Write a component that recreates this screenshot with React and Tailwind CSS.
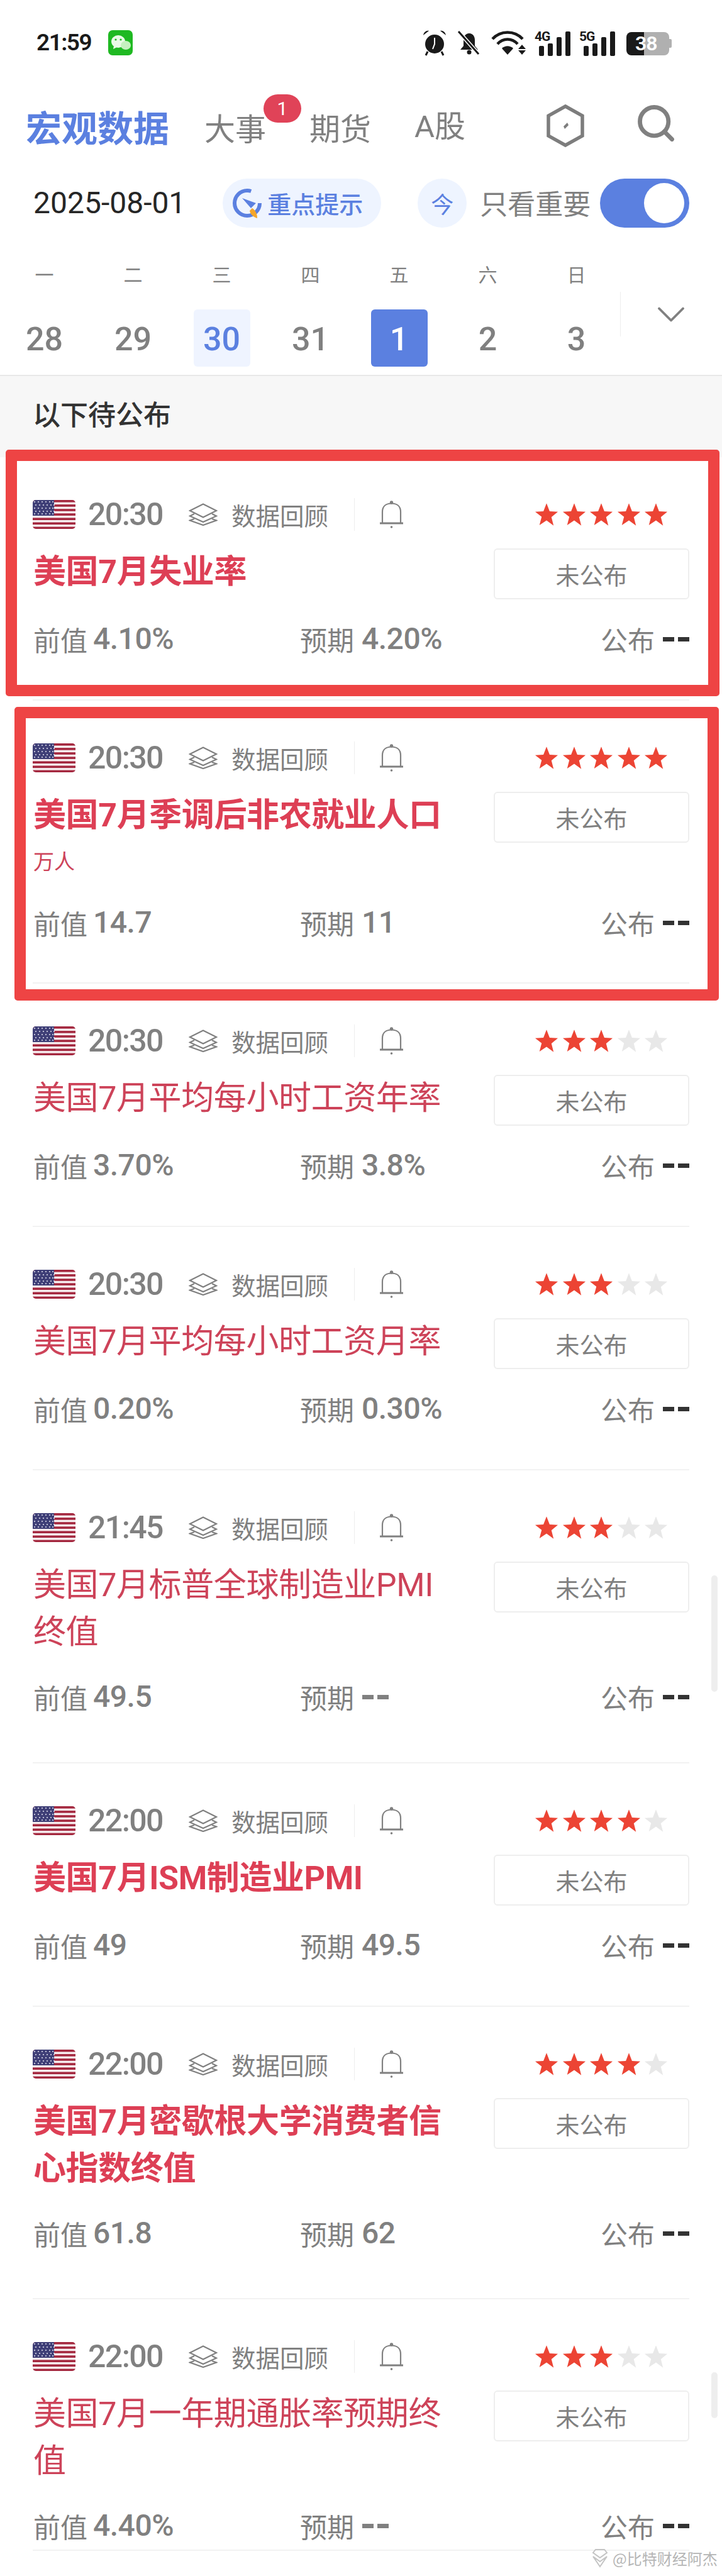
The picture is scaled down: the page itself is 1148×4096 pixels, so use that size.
import { Search, ChevronDown } from "lucide-react";

const items = [
  { time: "20:30", title: ["美国7月失业率"], bold: true, stars: 5, prev: "4.10%", exp: "4.20%", h: "h-[387px]" },
  { time: "20:30", title: ["美国7月季调后非农就业人口"], bold: true, unit: "万人", stars: 5, prev: "14.7", exp: "11", h: "h-[450px]" },
  { time: "20:30", title: ["美国7月平均每小时工资年率"], stars: 3, prev: "3.70%", exp: "3.8%", h: "h-[387px]" },
  { time: "20:30", title: ["美国7月平均每小时工资月率"], stars: 3, prev: "0.20%", exp: "0.30%", h: "h-[387px]" },
  { time: "21:45", title: ["美国7月标普全球制造业PMI", "终值"], stars: 3, prev: "49.5", exp: "--", h: "h-[466px]" },
  { time: "22:00", title: ["美国7月ISM制造业PMI"], bold: true, stars: 4, prev: "49", exp: "49.5", h: "h-[387px]" },
  { time: "22:00", title: ["美国7月密歇根大学消费者信", "心指数终值"], bold: true, stars: 4, prev: "61.8", exp: "62", h: "h-[465px]" },
  { time: "22:00", title: ["美国7月一年期通胀率预期终", "值"], stars: 3, prev: "4.40%", exp: "--", h: "h-[400px]" },
];

const weekdays = ["一", "二", "三", "四", "五", "六", "日"];
const days = ["28", "29", "30", "31", "1", "2", "3"];

function Flag() {
  const stripes = [0, 1, 2, 3, 4, 5, 6];
  return (
    <svg width="68" height="46" viewBox="0 0 68 46" className="shrink-0">
      <defs>
        <clipPath id="flagclip">
          <rect width="68" height="46" rx="5" />
        </clipPath>
      </defs>
      <g clipPath="url(#flagclip)">
        <rect width="68" height="46" fill="#f7eef0" />
        {stripes.map((i) => (
          <rect key={i} y={i * 7.1} width="68" height="3.6" fill="#a4283f" />
        ))}
        <rect width="34" height="25" fill="#3f3f77" />
        {[3, 8, 13, 18, 22].map((y, r) =>
          [3, 9, 15, 21, 27, 32].map((x) => (
            <circle key={`${x}-${y}`} cx={x + (r % 2) * 2} cy={y} r="1" fill="#e6e6f2" />
          ))
        )}
      </g>
    </svg>
  );
}

function Star({ on }) {
  return (
    <svg width="38" height="38" viewBox="0 0 24 24">
      <path
        d="M12 0.8l3.1 8.1 8.3.4-6.5 5.4 2.2 8.5L12 18l-7.1 4.8 2.2-8.5L.6 9.3l8.3-.4z"
        fill={on ? "#ec4434" : "#e8e8e8"}
      />
    </svg>
  );
}

function LayersIcon() {
  return (
    <svg width="46" height="36" viewBox="0 0 46 36" fill="none" stroke="#808080" strokeWidth="2.2" className="ml-[36px] shrink-0">
      <path d="M23 1.5L44 12 23 22.5 2 12z" />
      <path d="M9 17L2 20.5 23 30 44 20.5 37 17" />
      <path d="M9 25L2 27.5 23 35 44 27.5 37 25" />
    </svg>
  );
}

function BellIcon() {
  return (
    <svg width="39" height="44" viewBox="0 0 39 44" fill="none" stroke="#808080" strokeWidth="2.2" className="ml-[39px] shrink-0">
      <circle cx="19.5" cy="3" r="1.6" fill="#808080" />
      <path d="M5 35V18C5 9 11 4.5 19.5 4.5S34 9 34 18v17" />
      <path d="M1 36h37" strokeWidth="3" />
      <circle cx="19.5" cy="42" r="1.8" fill="#808080" stroke="none" />
    </svg>
  );
}

function Signal({ label }) {
  return (
    <div className="relative w-[57px] h-[40px]">
      <span className="absolute left-0 -top-[3px] text-[21px] leading-[24px] font-bold tracking-[-1px] text-[#1a1a1a] font-['Roboto']">
        {label}
      </span>
      <div className="absolute right-0 bottom-0 flex items-end gap-[6px]">
        <div className="w-[8px] h-[16px] rounded-[2px] bg-[#1a1a1a]" />
        <div className="w-[8px] h-[20px] rounded-[2px] bg-[#1a1a1a]" />
        <div className="w-[8px] h-[30px] rounded-[2px] bg-[#1a1a1a]" />
        <div className="w-[8px] h-[39px] rounded-[2px] bg-[#1a1a1a]" />
      </div>
    </div>
  );
}

function StatusBar() {
  return (
    <div className="h-[92px] pt-[48px] pl-[58px] pr-[80px] flex items-start justify-between">
      <div className="flex items-center gap-[27px] h-[40px]">
        <span className="text-[37px] leading-[40px] font-semibold tracking-[-1.5px] text-[#1a1a1a] font-['Roboto']">
          21:59
        </span>
        <svg width="39" height="40" viewBox="0 0 39 40">
          <rect width="39" height="40" rx="7" fill="#1fb922" />
          <ellipse cx="16" cy="18" rx="11" ry="10" fill="#e9fbe6" />
          <path d="M9 25l-1 5 6-3z" fill="#e9fbe6" />
          <ellipse cx="28" cy="24" rx="8" ry="7" fill="#c5f0bf" />
          <circle cx="12" cy="15" r="1.6" fill="#1fb922" />
          <circle cx="20" cy="15" r="1.6" fill="#1fb922" />
        </svg>
      </div>
      <div className="flex items-start">
        <svg width="40" height="42" viewBox="0 0 40 42" className="-mt-[1px]">
          <circle cx="20" cy="23" r="15" fill="#1a1a1a" />
          <path d="M20 13v10l-3 8" stroke="#fff" strokeWidth="2" fill="none" />
          <path d="M2 9c1-5 5-8 9-7zM38 9c-1-5-5-8-9-7z" fill="#1a1a1a" />
          <path d="M9 35l-3 6M31 35l3 6" stroke="#1a1a1a" strokeWidth="3" />
        </svg>
        <svg width="38" height="38" viewBox="0 0 38 38" className="ml-[16px] mt-[1px]">
          <path d="M19 4c6 0 9 5 9 11v9l5 6H5l5-6v-9c0-6 3-11 9-11z" fill="#1a1a1a" />
          <circle cx="19" cy="34" r="3.5" fill="#1a1a1a" />
          <path d="M2 1l32 36" stroke="#fff" strokeWidth="6" />
          <path d="M2 1l32 36" stroke="#1a1a1a" strokeWidth="3" />
        </svg>
        <svg width="56" height="40" viewBox="0 0 56 40" className="ml-[16px] mt-[1px]">
          <path d="M2 13C15 -1 37 -1 50 13" stroke="#1a1a1a" strokeWidth="4.5" fill="none" />
          <path d="M10 21C19 11 33 11 42 21" stroke="#1a1a1a" strokeWidth="4.5" fill="none" />
          <path d="M26 38l-9-10c5-5 13-5 18 0z" fill="#1a1a1a" />
          <path d="M49 22l6 7H43zM49 38l-6-7h12z" fill="#1a1a1a" />
        </svg>
        <div className="ml-[13px] mt-[1px]">
          <Signal label="4G" />
        </div>
        <div className="ml-[14px] mt-[1px]">
          <Signal label="5G" />
        </div>
        <div className="relative ml-[18px] mt-[3px] w-[72px] h-[37px] flex">
          <div className="w-[28px] h-full bg-[#1a1a1a] rounded-l-[8px]" />
          <div className="w-[40px] h-full bg-[#b0b0b0] rounded-r-[8px]" />
          <div className="w-[4px] h-[14px] mt-[11px] bg-[#b0b0b0] rounded-r-[2px]" />
          <span className="absolute left-[14px] top-0 text-[32px] leading-[37px] font-semibold tracking-[-1px] text-white font-['Roboto']">
            38
          </span>
        </div>
      </div>
    </div>
  );
}

function Tabs() {
  return (
    <div className="h-[192px] flex items-start pl-[41px]">
      <span className="mt-[73px] text-[57px] leading-[70px] font-semibold text-[#5b80e0]">宏观数据</span>
      <div className="relative ml-[56px] mt-[78px] text-[49px] leading-[64px] text-[#808080]">
        大事
        <span className="absolute left-[94px] -top-[20px] w-[60px] h-[45px] rounded-full bg-[#e04358] text-white text-[30px] leading-[45px] text-center font-['Roboto']">
          1
        </span>
      </div>
      <span className="ml-[69px] mt-[78px] text-[49px] leading-[64px] text-[#808080]">期货</span>
      <span className="ml-[69px] mt-[78px] text-[49px] leading-[64px] text-[#808080] font-['Roboto','Noto_Sans_CJK_SC']">A股</span>
      <svg width="60" height="68" viewBox="0 0 60 68" className="ml-[129px] mt-[74px]">
        <path d="M30 3L57 18v32L30 65 3 50V18z" fill="none" stroke="#7d7d7d" strokeWidth="5.5" />
        <path d="M33 29l2 4-6 6-2-4z" fill="#7d7d7d" />
      </svg>
      <Search size={68} strokeWidth={2.4} className="ml-[80px] mt-[70px] text-[#808080]" />
    </div>
  );
}

function Toolbar() {
  return (
    <div className="h-[95px] pl-[53px] flex items-start">
      <span className="mt-[11px] text-[48px] leading-[56px] text-[#262626] font-['Roboto']">2025-08-01</span>
      <div className="ml-[59px] w-[252px] h-[78px] rounded-full bg-[#eef4ff] flex items-center pl-[15px]">
        <svg width="50" height="56" viewBox="0 0 50 56">
          <circle cx="24" cy="28" r="20" stroke="#5b80e0" strokeWidth="6" fill="none" strokeDasharray="100 30" />
          <path d="M16 20l22 8-8 8z" fill="#5b80e0" />
          <path d="M32 36c6 4 8 10 8 16-6-2-11-6-12-12z" fill="#f4a62a" />
        </svg>
        <span className="ml-[6px] text-[38px] leading-[50px] font-medium text-[#5b80e0]">重点提示</span>
      </div>
      <div className="ml-[58px] w-[78px] h-[78px] rounded-full bg-[#eef4ff] text-center text-[36px] leading-[78px] text-[#5b80e0]">今</div>
      <span className="ml-[21px] mt-[8px] text-[44px] leading-[60px] text-[#808080]">只看重要</span>
      <div className="ml-[15px] w-[142px] h-[78px] rounded-full bg-[#5b80e0] flex items-center justify-end pr-[8px]">
        <div className="w-[64px] h-[64px] rounded-full bg-white" />
      </div>
    </div>
  );
}

function Calendar() {
  return (
    <div className="relative h-[219px] border-b-[2px] border-[#e8e8e8]">
      <div className="grid grid-cols-[repeat(7,141px)]">
        {weekdays.map((d) => (
          <div key={d} className="h-[113px] pt-[36px] text-center text-[30px] leading-[40px] text-[#808080]">
            {d}
          </div>
        ))}
        {days.map((d) => (
          <div key={d} className="flex justify-center">
            <div
              className={`w-[90px] h-[91px] rounded-[6px] text-center text-[52px] leading-[96px] font-medium font-['Roboto'] ${
                d === "1" ? "bg-[#5b80e0] text-white" : d === "30" ? "bg-[#eff4ff] text-[#5b80e0]" : "text-[#808080]"
              }`}
            >
              {d}
            </div>
          </div>
        ))}
      </div>
      <div className="absolute left-[986px] top-[85px] w-px h-[71px] bg-[#eeeeee]" />
      <ChevronDown size={76} strokeWidth={1.2} className="absolute left-[1029px] top-[83px] text-[#808080]" />
    </div>
  );
}

function Value({ value, dark, className }) {
  if (value !== "--") return <span className={`ml-[12px] ${className}`}>{value}</span>;
  return (
    <div className="ml-[13px] flex gap-[6px]">
      <div className={`w-[18px] h-[7px] ${dark ? "bg-[#333333]" : "bg-[#808080]"}`} />
      <div className={`w-[18px] h-[7px] ${dark ? "bg-[#333333]" : "bg-[#808080]"}`} />
    </div>
  );
}

function Item({ time, title, bold, unit, stars, prev, exp, h }) {
  const valueClass = "text-[48px] font-medium tracking-[-0.5px] font-['Roboto']";
  const gap = unit ? "mt-[56px]" : title.length > 1 ? "mt-[40px]" : "mt-[38px]";
  return (
    <div className={`${h} mx-[52px] pt-[65px] border-b-[2px] border-[#f2f2f2]`}>
      <div className="h-[52px] flex items-center">
        <Flag />
        <span className="ml-[20px] w-[124px] text-[50px] leading-[52px] font-medium tracking-[-1.6px] text-[#808080] font-['Roboto']">
          {time}
        </span>
        <LayersIcon />
        <span className="ml-[22px] text-[38.5px] leading-[52px] text-[#808080]">数据回顾</span>
        <div className="ml-[41px] w-px h-[52px] bg-[#eeeeee]" />
        <BellIcon />
        <div className="ml-auto mr-[34px] flex gap-[5.5px]">
          {[1, 2, 3, 4, 5].map((n) => (
            <Star key={n} on={n <= stars} />
          ))}
        </div>
      </div>
      <div className="mt-[28px] flex items-start justify-between">
        <div className="pl-[1px]">
          <div
            className={`text-[52px] leading-[75px] tracking-[-0.4px] font-['Roboto','Noto_Sans_CJK_SC'] ${
              bold ? "font-bold text-[#dd3f55]" : "text-[#cd4359]"
            }`}
          >
            {title.map((t) => (
              <div key={t}>{t}</div>
            ))}
          </div>
          {unit && <div className="mt-[16px] text-[33px] leading-[36px] text-[#cd4359]">{unit}</div>}
        </div>
        <div className="w-[311px] h-[81px] border-[2px] border-[#eeeeee] rounded-[6px] text-center text-[38px] leading-[77px] text-[#808080]">
          未公布
        </div>
      </div>
      <div className={`${gap} flex items-center h-[50px] pl-[1px] text-[43px] leading-[50px] text-[#808080]`}>
        <div className="w-[424px] flex items-center">
          前值
          <span className={`ml-[9px] ${valueClass}`}>{prev}</span>
        </div>
        <div className="flex items-center">
          预期
          <Value value={exp} className={valueClass} />
        </div>
        <div className="ml-auto flex items-center">
          公布
          <Value value="--" dark className={valueClass} />
        </div>
      </div>
    </div>
  );
}

export default function App() {
  return (
    <div className="relative w-[1148px] h-[4096px] overflow-hidden bg-white font-['Noto_Sans_CJK_SC','Roboto',sans-serif]">
      <StatusBar />
      <Tabs />
      <Toolbar />
      <Calendar />
      <div className="h-[129px] bg-[#f7f7f7] pl-[52px] pt-[29px] text-[44px] leading-[60px] font-medium text-[#333333]">以下待公布</div>
      {items.map((item, i) => (
        <Item key={i} {...item} />
      ))}

      {/* annotation boxes on top of the list */}
      <div className="absolute left-[9px] top-[715px] w-[1135px] h-[392px] border-[18px] border-[#ee4444] rounded-[5px]" />
      <div className="absolute left-[23px] top-[1124px] w-[1120px] h-[467px] border-[18px] border-[#ee4444] rounded-[5px]" />

      {/* scrollbar + watermark */}
      <div className="absolute left-[1131px] top-[2505px] w-[10px] h-[185px] rounded-full bg-[#eeeeee]" />
      <div className="absolute left-[1131px] top-[3772px] w-[10px] h-[73px] rounded-full bg-[#eeeeee]" />
      <div className="absolute left-[941px] top-[4053px] flex items-center text-[24px] leading-[30px] text-[#b5b5b5]">
        <svg width="26" height="30" viewBox="0 0 26 30" className="mr-[7px]">
          <path d="M13 14l11-8-4-5H6L2 6zM2 12l11 16 11-16-11 8z" fill="none" stroke="#c4c4c4" strokeWidth="2" />
        </svg>
        @比特财经阿杰
      </div>
    </div>
  );
}
